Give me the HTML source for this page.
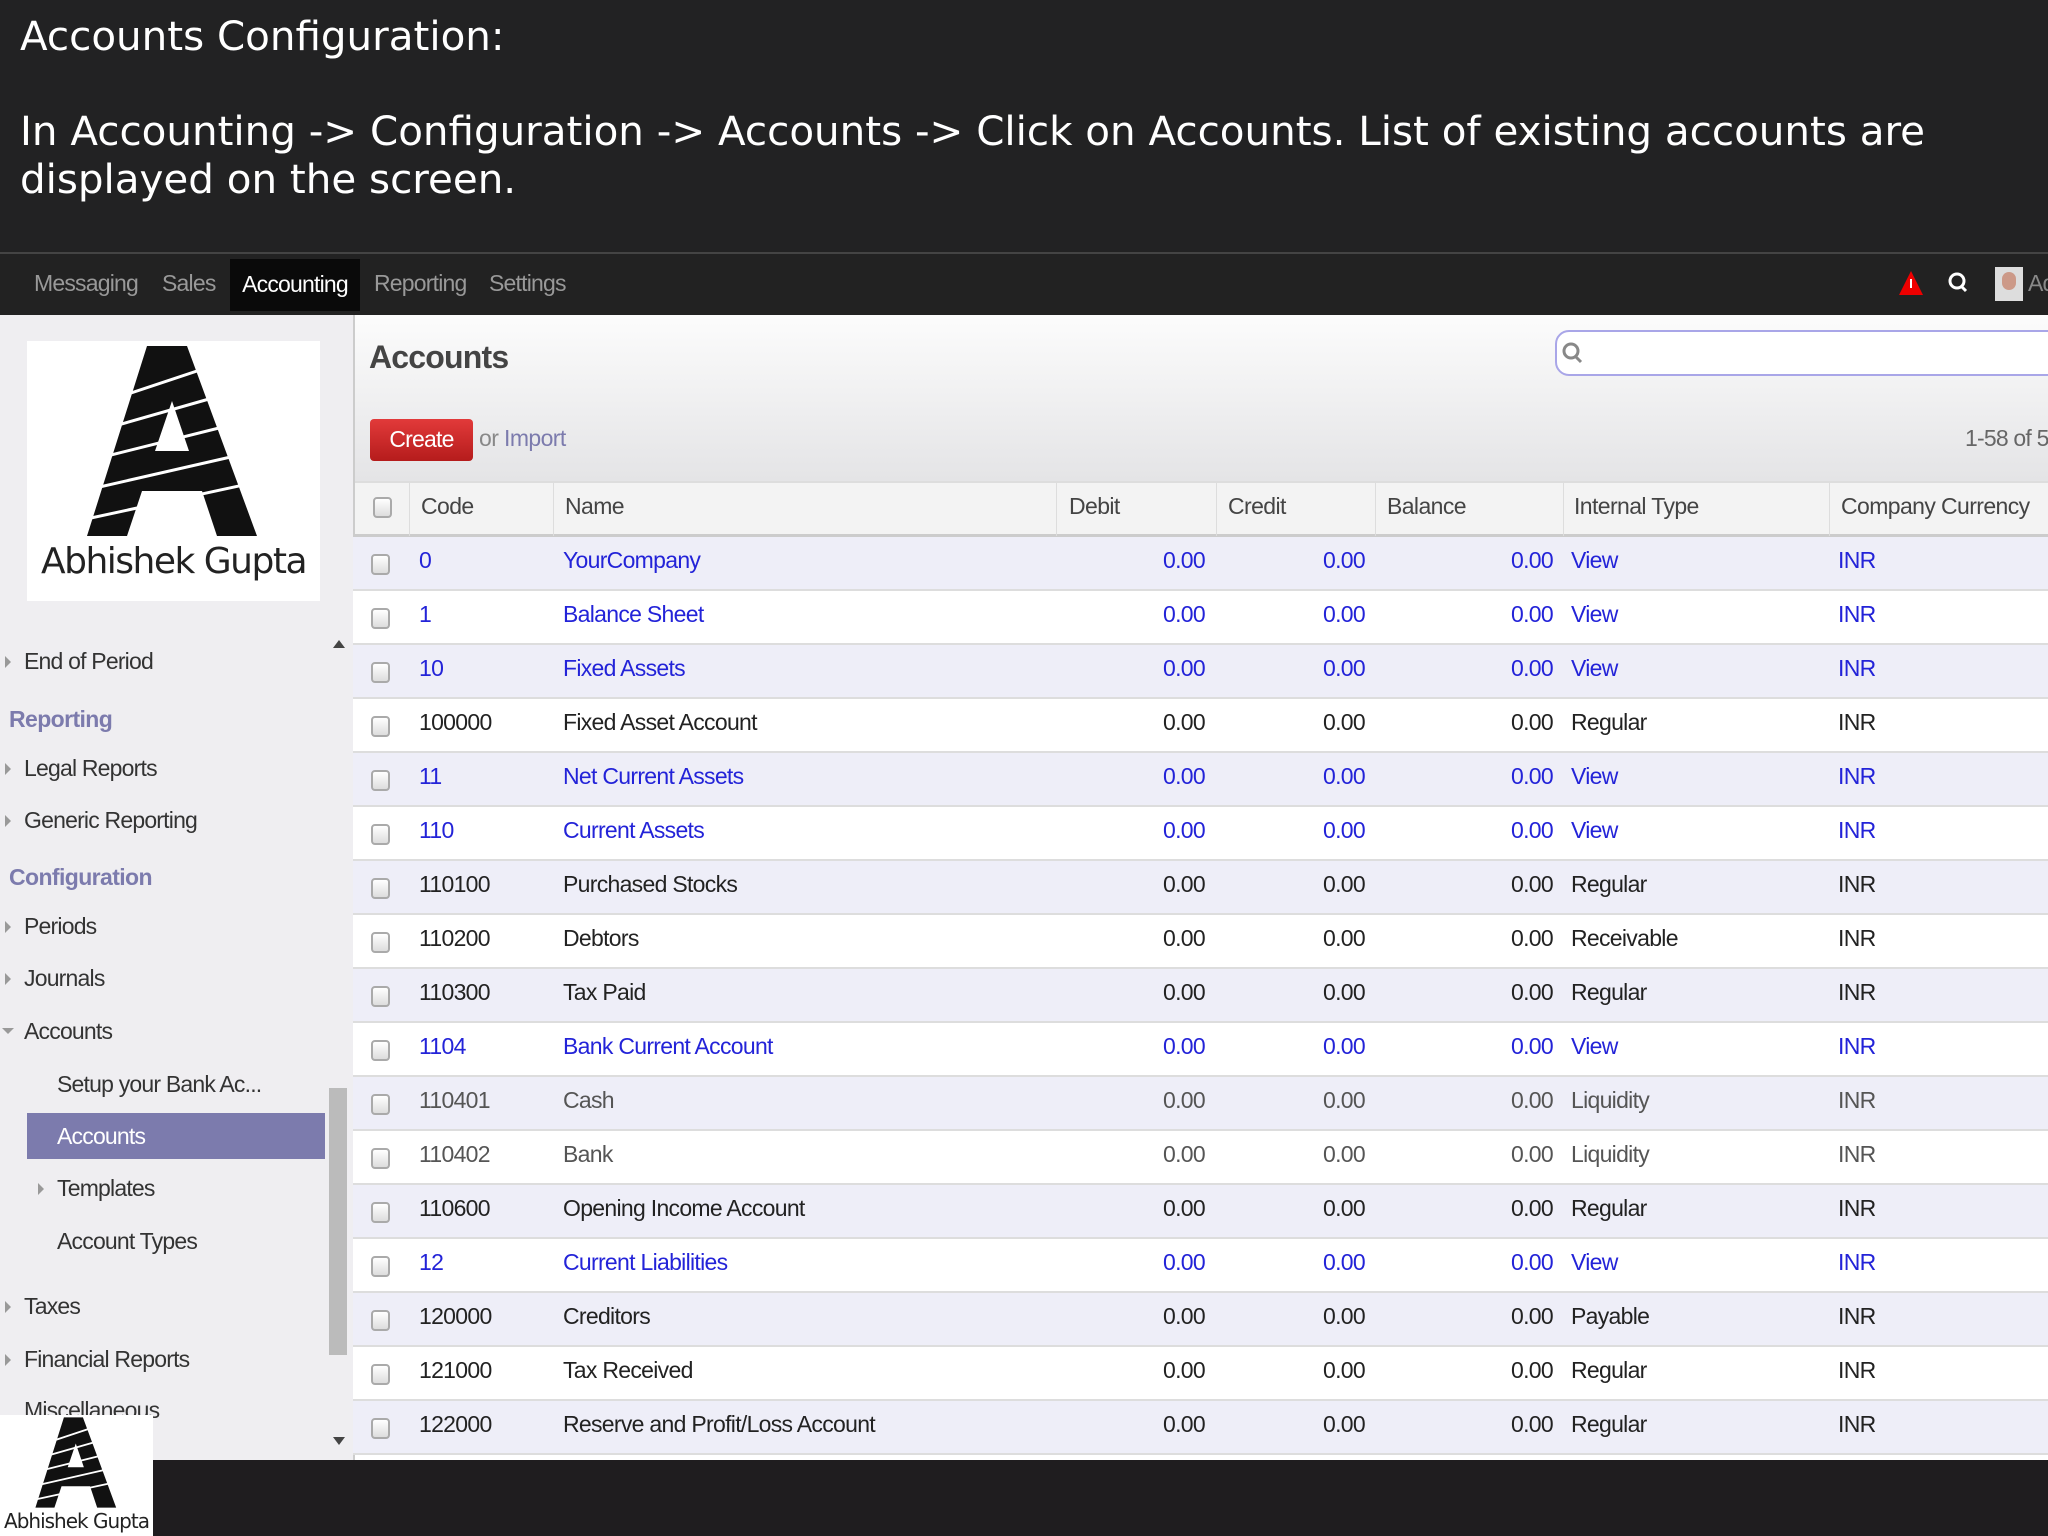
<!DOCTYPE html>
<html><head><meta charset="utf-8"><style>
*{margin:0;padding:0;box-sizing:border-box}
body{width:2048px;height:1536px;overflow:hidden;background:#222;font-family:"Liberation Sans",Arial,sans-serif;position:relative}
.top{position:absolute;left:0;top:0;width:2048px;height:251px;background:#222223;color:#fff;font-family:"DejaVu Sans",Verdana,sans-serif;font-size:40.4px;line-height:48px}
.top p{position:absolute;left:20px;white-space:nowrap}
.nav{position:absolute;left:0;top:252px;width:2048px;height:63px;background:#222;border-top:2px solid #444;font-size:23px;letter-spacing:-0.8px;color:#999}
.nav span{position:absolute;top:16px}
.nav .act{left:230px;top:5px;width:130px;height:52px;background:#0a0a0a;color:#fff;text-align:center;line-height:50px}
.side{position:absolute;left:0;top:315px;width:353px;height:1145px;background:#efeef1}
.si{position:absolute;font-size:23px;letter-spacing:-0.8px;color:#333;white-space:nowrap}
.tri{position:absolute;width:0;height:0;border-top:6px solid transparent;border-bottom:6px solid transparent;border-left:6px solid #999}
.hd{position:absolute;left:9px;font-size:23px;letter-spacing:-0.6px;color:#7c7bad;font-weight:bold}
.main{position:absolute;left:353px;top:315px;width:1695px;height:1145px;background:#fff;border-left:2px solid #ccc}
.mh{position:absolute;left:0;top:0;width:1695px;height:166px;background:linear-gradient(#fcfcfc,#e4e4e6)}
.row{position:absolute;left:0;width:1695px;height:54px;border-bottom:2px solid #ddd;font-size:23px;letter-spacing:-0.7px;color:#222}
.row span,.hr span{position:absolute;top:10px;white-space:nowrap}
.cb{position:absolute;left:18px;top:17px;width:19px;height:21px;border:2px solid #aaa;border-radius:4px;background:linear-gradient(#fff,#ddd)}
.l{color:#2323d8}
.hr{position:absolute;left:0;top:166px;width:1695px;height:56px;background:#f3f3f3;border-bottom:3px solid #ccc;border-top:2px solid #ddd;font-size:23px;letter-spacing:-0.6px;color:#444}
.hr i{position:absolute;top:0;height:53px;width:1px;background:#ddd}
.bot{position:absolute;left:0;top:1460px;width:2048px;height:76px;background:#1f1d1f}
</style></head><body>
<div class="top">
<p style="top:12px">Accounts Configuration:</p>
<p style="top:107px">In Accounting -&gt; Configuration -&gt; Accounts -&gt; Click on Accounts. List of existing accounts are</p>
<p style="top:155px">displayed on the screen.</p>
</div>
<div class="nav">
<span style="left:34px">Messaging</span><span style="left:162px">Sales</span>
<span class="act">Accounting</span>
<span style="left:374px">Reporting</span><span style="left:489px">Settings</span>
<svg style="position:absolute;left:1898px;top:16px" width="26" height="26" viewBox="0 0 26 26"><path d="M13 1L25 25H1Z" fill="#e00"/><rect x="12" y="9" width="2" height="9" fill="#fff"/></svg>
<svg style="position:absolute;left:1946px;top:16px" width="26" height="26" viewBox="0 0 26 26"><circle cx="11" cy="11" r="7" fill="none" stroke="#fff" stroke-width="3"/><path d="M15 16l5 5" stroke="#fff" stroke-width="3"/></svg>
<div style="position:absolute;left:1995px;top:13px;width:28px;height:34px;background:#ddd"><div style="margin:5px auto;width:14px;height:18px;border-radius:7px;background:#c98"></div></div>
<span style="left:2028px;color:#888">Ad</span>
</div>
<div class="side">
<div style="position:absolute;left:27px;top:26px;width:293px;height:260px;background:#fff">
<svg width="293" height="200" viewBox="0 0 293 200"><path d="M120 5L60 195H100L115 150H175L190 195H230L160 5ZM128 110L145 60L162 110Z" fill="#111"/><g stroke="#fff" stroke-width="3"><path d="M80 60L200 20M70 90L210 50M60 120L220 80M55 150L230 110M50 180L235 140"/></g></svg>
<div style="position:absolute;left:0;top:200px;width:293px;text-align:center;font-family:'DejaVu Sans',sans-serif;font-size:36px;color:#222;letter-spacing:-1.5px;white-space:nowrap">Abhishek Gupta</div>
</div>
<div style="position:absolute;left:333px;top:325px;border-left:6px solid transparent;border-right:6px solid transparent;border-bottom:8px solid #444"></div>
<div style="position:absolute;left:329px;top:773px;width:18px;height:267px;background:#bbb"></div>
<div style="position:absolute;left:333px;top:1122px;border-left:6px solid transparent;border-right:6px solid transparent;border-top:8px solid #444"></div>
<div class="tri" style="left:5px;top:341px"></div><div class="si" style="left:24px;top:333px">End of Period</div>
<div class="hd" style="top:391px">Reporting</div>
<div class="tri" style="left:5px;top:448px"></div><div class="si" style="left:24px;top:440px">Legal Reports</div>
<div class="tri" style="left:5px;top:500px"></div><div class="si" style="left:24px;top:492px">Generic Reporting</div>
<div class="hd" style="top:549px">Configuration</div>
<div class="tri" style="left:5px;top:606px"></div><div class="si" style="left:24px;top:598px">Periods</div>
<div class="tri" style="left:5px;top:658px"></div><div class="si" style="left:24px;top:650px">Journals</div>
<div style="position:absolute;left:2px;top:713px;border-left:6px solid transparent;border-right:6px solid transparent;border-top:6px solid #999"></div><div class="si" style="left:24px;top:703px">Accounts</div>
<div class="si" style="left:57px;top:756px">Setup your Bank Ac...</div>
<div style="position:absolute;left:27px;top:798px;width:298px;height:46px;background:#7c7bad"></div><div class="si" style="left:57px;top:808px;color:#fff">Accounts</div>
<div class="tri" style="left:38px;top:868px"></div><div class="si" style="left:57px;top:860px">Templates</div>
<div class="si" style="left:57px;top:913px">Account Types</div>
<div class="tri" style="left:5px;top:986px"></div><div class="si" style="left:24px;top:978px">Taxes</div>
<div class="tri" style="left:5px;top:1039px"></div><div class="si" style="left:24px;top:1031px">Financial Reports</div>
<div class="si" style="left:24px;top:1082px">Miscellaneous</div>
</div>
<div class="main">
<div class="mh">
<div style="position:absolute;left:14px;top:24px;font-size:32px;font-weight:bold;color:#444;letter-spacing:-0.8px">Accounts</div>
<div style="position:absolute;left:1200px;top:15px;width:520px;height:46px;border:2px solid #a9a6e8;border-radius:14px;background:#fff"></div>
<svg style="position:absolute;left:1205px;top:25px" width="26" height="26" viewBox="0 0 26 26"><circle cx="11" cy="11" r="7" fill="none" stroke="#888" stroke-width="3"/><path d="M15 16l6 6" stroke="#888" stroke-width="3"/></svg>
<div style="position:absolute;left:15px;top:104px;width:103px;height:42px;background:linear-gradient(#e23a3a,#b51c1c);border-radius:4px;color:#fff;font-size:23px;letter-spacing:-0.8px;text-align:center;line-height:40px">Create</div>
<div style="position:absolute;left:124px;top:110px;font-size:23px;letter-spacing:-0.6px;color:#888">or <span style="color:#7c7bad">Import</span></div>
<div style="position:absolute;left:1610px;top:110px;font-size:23px;letter-spacing:-0.8px;color:#666;white-space:nowrap">1-58 of 58</div>
</div>
<div class="hr"><div class="cb" style="top:14px"></div>
<i style="left:54px"></i><i style="left:198px"></i><i style="left:701px"></i><i style="left:861px"></i><i style="left:1020px"></i><i style="left:1208px"></i><i style="left:1474px"></i>
<span style="left:66px">Code</span><span style="left:210px">Name</span><span style="left:714px">Debit</span><span style="left:873px">Credit</span><span style="left:1032px">Balance</span><span style="left:1219px">Internal Type</span><span style="left:1486px">Company Currency</span></div>
</div>
<div class="main" style="background:none;border:none;top:537px;height:923px;overflow:hidden">
<div class="row" style="top:0;background:#eeeef8"><div class="cb"></div><span class="l" style="left:66px">0</span><span class="l" style="left:210px">YourCompany</span><span class="l" style="left:810px">0.00</span><span class="l" style="left:970px">0.00</span><span class="l" style="left:1158px">0.00</span><span class="l" style="left:1218px">View</span><span class="l" style="left:1485px">INR</span></div>
<div class="row" style="top:54px;background:#fff"><div class="cb"></div><span class="l" style="left:66px">1</span><span class="l" style="left:210px">Balance Sheet</span><span class="l" style="left:810px">0.00</span><span class="l" style="left:970px">0.00</span><span class="l" style="left:1158px">0.00</span><span class="l" style="left:1218px">View</span><span class="l" style="left:1485px">INR</span></div>
<div class="row" style="top:108px;background:#eeeef8"><div class="cb"></div><span class="l" style="left:66px">10</span><span class="l" style="left:210px">Fixed Assets</span><span class="l" style="left:810px">0.00</span><span class="l" style="left:970px">0.00</span><span class="l" style="left:1158px">0.00</span><span class="l" style="left:1218px">View</span><span class="l" style="left:1485px">INR</span></div>
<div class="row" style="top:162px;background:#fff"><div class="cb"></div><span style="left:66px">100000</span><span style="left:210px">Fixed Asset Account</span><span style="left:810px">0.00</span><span style="left:970px">0.00</span><span style="left:1158px">0.00</span><span style="left:1218px">Regular</span><span style="left:1485px">INR</span></div>
<div class="row" style="top:216px;background:#eeeef8"><div class="cb"></div><span class="l" style="left:66px">11</span><span class="l" style="left:210px">Net Current Assets</span><span class="l" style="left:810px">0.00</span><span class="l" style="left:970px">0.00</span><span class="l" style="left:1158px">0.00</span><span class="l" style="left:1218px">View</span><span class="l" style="left:1485px">INR</span></div>
<div class="row" style="top:270px;background:#fff"><div class="cb"></div><span class="l" style="left:66px">110</span><span class="l" style="left:210px">Current Assets</span><span class="l" style="left:810px">0.00</span><span class="l" style="left:970px">0.00</span><span class="l" style="left:1158px">0.00</span><span class="l" style="left:1218px">View</span><span class="l" style="left:1485px">INR</span></div>
<div class="row" style="top:324px;background:#eeeef8"><div class="cb"></div><span style="left:66px">110100</span><span style="left:210px">Purchased Stocks</span><span style="left:810px">0.00</span><span style="left:970px">0.00</span><span style="left:1158px">0.00</span><span style="left:1218px">Regular</span><span style="left:1485px">INR</span></div>
<div class="row" style="top:378px;background:#fff"><div class="cb"></div><span style="left:66px">110200</span><span style="left:210px">Debtors</span><span style="left:810px">0.00</span><span style="left:970px">0.00</span><span style="left:1158px">0.00</span><span style="left:1218px">Receivable</span><span style="left:1485px">INR</span></div>
<div class="row" style="top:432px;background:#eeeef8"><div class="cb"></div><span style="left:66px">110300</span><span style="left:210px">Tax Paid</span><span style="left:810px">0.00</span><span style="left:970px">0.00</span><span style="left:1158px">0.00</span><span style="left:1218px">Regular</span><span style="left:1485px">INR</span></div>
<div class="row" style="top:486px;background:#fff"><div class="cb"></div><span class="l" style="left:66px">1104</span><span class="l" style="left:210px">Bank Current Account</span><span class="l" style="left:810px">0.00</span><span class="l" style="left:970px">0.00</span><span class="l" style="left:1158px">0.00</span><span class="l" style="left:1218px">View</span><span class="l" style="left:1485px">INR</span></div>
<div class="row" style="top:540px;background:#eeeef8;color:#555"><div class="cb"></div><span style="left:66px">110401</span><span style="left:210px">Cash</span><span style="left:810px">0.00</span><span style="left:970px">0.00</span><span style="left:1158px">0.00</span><span style="left:1218px">Liquidity</span><span style="left:1485px">INR</span></div>
<div class="row" style="top:594px;background:#fff;color:#555"><div class="cb"></div><span style="left:66px">110402</span><span style="left:210px">Bank</span><span style="left:810px">0.00</span><span style="left:970px">0.00</span><span style="left:1158px">0.00</span><span style="left:1218px">Liquidity</span><span style="left:1485px">INR</span></div>
<div class="row" style="top:648px;background:#eeeef8"><div class="cb"></div><span style="left:66px">110600</span><span style="left:210px">Opening Income Account</span><span style="left:810px">0.00</span><span style="left:970px">0.00</span><span style="left:1158px">0.00</span><span style="left:1218px">Regular</span><span style="left:1485px">INR</span></div>
<div class="row" style="top:702px;background:#fff"><div class="cb"></div><span class="l" style="left:66px">12</span><span class="l" style="left:210px">Current Liabilities</span><span class="l" style="left:810px">0.00</span><span class="l" style="left:970px">0.00</span><span class="l" style="left:1158px">0.00</span><span class="l" style="left:1218px">View</span><span class="l" style="left:1485px">INR</span></div>
<div class="row" style="top:756px;background:#eeeef8"><div class="cb"></div><span style="left:66px">120000</span><span style="left:210px">Creditors</span><span style="left:810px">0.00</span><span style="left:970px">0.00</span><span style="left:1158px">0.00</span><span style="left:1218px">Payable</span><span style="left:1485px">INR</span></div>
<div class="row" style="top:810px;background:#fff"><div class="cb"></div><span style="left:66px">121000</span><span style="left:210px">Tax Received</span><span style="left:810px">0.00</span><span style="left:970px">0.00</span><span style="left:1158px">0.00</span><span style="left:1218px">Regular</span><span style="left:1485px">INR</span></div>
<div class="row" style="top:864px;background:#eeeef8"><div class="cb"></div><span style="left:66px">122000</span><span style="left:210px">Reserve and Profit/Loss Account</span><span style="left:810px">0.00</span><span style="left:970px">0.00</span><span style="left:1158px">0.00</span><span style="left:1218px">Regular</span><span style="left:1485px">INR</span></div>
</div>
<div class="bot"></div>
<div style="position:absolute;left:0;top:1415px;width:153px;height:121px;background:#fff">
<svg width="153" height="95" viewBox="0 0 293 200"><path d="M120 5L60 195H100L115 150H175L190 195H230L160 5ZM128 110L145 60L162 110Z" fill="#111"/><g stroke="#fff" stroke-width="4"><path d="M80 60L200 20M70 90L210 50M60 120L220 80M55 150L230 110M50 180L235 140"/></g></svg>
<div style="position:absolute;left:0;top:94px;width:153px;text-align:center;font-family:'DejaVu Sans',sans-serif;font-size:20px;color:#222;letter-spacing:-1px;white-space:nowrap">Abhishek Gupta</div>
</div>
</body></html>
